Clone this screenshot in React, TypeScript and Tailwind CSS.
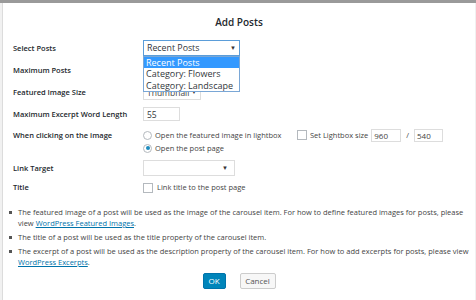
import React from "react";

const font = { fontFamily: '"Open Sans", "Noto Sans", sans-serif' };

function Caret() {
  return <span className="text-[6px] text-[#333] leading-none">▼</span>;
}

function Radio({ checked }: { checked?: boolean }) {
  return (
    <span className="w-[9px] h-[9px] rounded-full border border-[#b4b9be] bg-white flex items-center justify-center shrink-0">
      {checked && <span className="w-[4px] h-[4px] rounded-full bg-[#1e8cbe]" />}
    </span>
  );
}

function Check() {
  return <span className="w-[10px] h-[10px] border border-[#b4b9be] bg-white shrink-0" />;
}

function Bullet() {
  return <span className="mt-[4px] w-[3px] h-[3px] bg-[#555] shrink-0" />;
}

export default function App() {
  return (
    <div style={font} className="w-[476px] h-[300px] bg-[#f1f1f1] overflow-hidden text-[#444]">
      <div className="h-[3px] bg-[#9a9a9a]" />
      <div className="h-[297px] ml-[2px] mr-[1px] bg-white border-l border-[#dcdcdc] flex flex-col">
        <div className="h-[34px] pt-[12px] text-center text-[10px] font-semibold text-[#23282d] leading-[14px]">
          Add Posts
        </div>

        <div className="flex flex-col pl-[10px] text-[7.5px] leading-[11px]">
          {/* Select Posts */}
          <div className="grid grid-cols-[130px_1fr] items-center h-[22px]">
            <span className="font-semibold text-[#23282d]">Select Posts</span>
            <div className="relative w-[97px]">
              <div className="h-[16px] border border-[#5b9dd9] flex items-center justify-between px-[3px] text-[8.8px] text-[#32373c] bg-white">
                <span>Recent Posts</span>
                <Caret />
              </div>
              <div className="absolute left-0 top-[16px] w-[97px] z-10 bg-white border border-[#7aa7d6] text-[9px] leading-[11.4px] text-[#32373c] whitespace-nowrap">
                <div className="bg-[#3399ff] text-white px-[2px]">Recent Posts</div>
                <div className="px-[2px]">Category: Flowers</div>
                <div className="px-[2px]">Category: Landscape</div>
              </div>
            </div>
          </div>

          {/* Maximum Posts */}
          <div className="grid grid-cols-[130px_1fr] items-center h-[22px]">
            <span className="font-semibold text-[#23282d]">Maximum Posts</span>
            <div className="w-[37px] h-[14px] border border-[#ddd]" />
          </div>

          {/* Featured Image Size */}
          <div className="grid grid-cols-[130px_1fr] items-center h-[22px]">
            <span className="font-semibold text-[#23282d]">Featured Image Size</span>
            <div className="w-[58px] h-[15px] border border-[#ddd] flex items-center justify-between px-[3px] text-[8.5px]">
              <span>Thumbnail</span>
              <Caret />
            </div>
          </div>

          {/* Excerpt */}
          <div className="grid grid-cols-[130px_1fr] items-center h-[22px]">
            <span className="font-semibold text-[#23282d]">Maximum Excerpt Word Length</span>
            <div className="w-[37px] h-[14px] border border-[#ddd] flex items-center px-[3px] text-[8.5px] text-[#32373c]">
              55
            </div>
          </div>

          {/* When clicking */}
          <div className="grid grid-cols-[130px_1fr] items-start h-[32px] pt-[3px]">
            <span className="font-semibold text-[#23282d] leading-[14px]">When clicking on the image</span>
            <div className="flex flex-col">
              <div className="flex items-center h-[14px]">
                <div className="flex items-center gap-[3px] w-[154px]">
                  <Radio />
                  <span>Open the featured image in lightbox</span>
                </div>
                <div className="flex items-center gap-[3px]">
                  <Check />
                  <span>Set Lightbox size</span>
                  <div className="w-[30px] h-[13px] border border-[#ddd] flex items-center px-[2px] text-[8px]">960</div>
                  <span className="px-[2px]">/</span>
                  <div className="w-[29px] h-[13px] border border-[#ddd] flex items-center px-[2px] text-[8px]">540</div>
                </div>
              </div>
              <div className="flex items-center gap-[3px] h-[12px]">
                <Radio checked />
                <span>Open the post page</span>
              </div>
            </div>
          </div>

          {/* Link Target */}
          <div className="grid grid-cols-[130px_1fr] items-center h-[22px]">
            <span className="font-semibold text-[#23282d]">Link Target</span>
            <div className="w-[92px] h-[16px] border border-[#ddd] flex items-center justify-end px-[6px]">
              <Caret />
            </div>
          </div>

          {/* Title */}
          <div className="grid grid-cols-[130px_1fr] items-center h-[17px]">
            <span className="font-semibold text-[#23282d]">Title</span>
            <div className="flex items-center gap-[4px]">
              <Check />
              <span>Link title to the post page</span>
            </div>
          </div>
        </div>

        <ul className="mt-[11px] pl-[6px] pr-[4px] flex flex-col gap-[3px] text-[7.5px] text-[#444]">
          <li className="flex gap-[6px] leading-[11px]">
            <Bullet />
            <span className="leading-[11px]">
              The featured image of a post will be used as the image of the carousel item. For how to define featured images for posts, please view{" "}
              <a className="text-[#0073aa] underline">WordPress Featured Images</a>.
            </span>
          </li>
          <li className="flex gap-[6px] leading-[11px]">
            <Bullet />
            <span className="leading-[11px]">The title of a post will be used as the title property of the carousel item.</span>
          </li>
          <li className="flex gap-[6px] leading-[11px]">
            <Bullet />
            <span className="leading-[11px]">
              The excerpt of a post will be used as the description property of the carousel item. For how to add excerpts for posts, please view{" "}
              <a className="text-[#0073aa] underline">WordPress Excerpts</a>.
            </span>
          </li>
        </ul>

        <div className="mt-[5px] flex justify-center gap-[14px] text-[8px]">
          <button className="w-[23px] h-[16px] bg-[#0085ba] border border-[#0073aa] text-white rounded-[2px] flex items-center justify-center">
            OK
          </button>
          <button className="w-[36px] h-[16px] bg-[#f7f7f7] border border-[#ccc] text-[#555] rounded-[2px] flex items-center justify-center">
            Cancel
          </button>
        </div>
      </div>
    </div>
  );
}
